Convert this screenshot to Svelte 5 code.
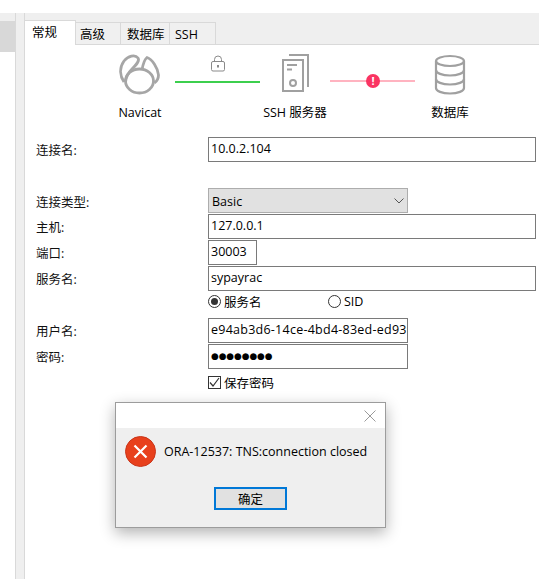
<script>
  const tabs = [
    { label: '常规', active: true },
    { label: '高级' },
    { label: '数据库' },
    { label: 'SSH' }
  ];
</script>

<div class="page">
  <div class="top-gap"></div>
  <div class="shell">
    <aside class="side">
      <div class="side-head"></div>
      <div class="side-sel"></div>
      <div class="side-list"></div>
    </aside>
    <div class="gutter"></div>
    <main class="main">
      <nav class="tabs">
        {#each tabs as t}
          <div class="tab" class:active={t.active}>{t.label}</div>
        {/each}
      </nav>
      <section class="panel">
        <div class="flow">
          <div class="node">
            <svg class="ico" width="42" height="42" viewBox="0 0 42 42" fill="none" stroke="#a6a6a6" stroke-width="2.800">
              <path d="M5 28C1 22 0 14 5 7 9 2 16 0 19 4 21 7 17 11 13 15 9 19 7 23 6.500 28" />
              <ellipse cx="20.500" cy="27" rx="14" ry="12" />
              <path d="M23 16C24 10 26 5 28 3.500 33 5 39 14 39.500 21 39.500 25 38 27 35.500 29" />
            </svg>
            <div class="cap">Navicat</div>
          </div>
          <div class="link">
            <svg class="lock" width="16" height="18" viewBox="0 0 16 18" fill="none" stroke="#8a8a8a">
              <rect x="1.500" y="6.500" width="13" height="9.500" rx="1.500" />
              <path d="M4.500 6.500V4.500a3.500 3.500 0 0 1 7 0v2" />
              <path d="M8 10v2.500" stroke-width="2" />
            </svg>
            <div class="line ok"></div>
          </div>
          <div class="node">
            <svg class="ico" width="42" height="42" viewBox="0 0 42 42" fill="none" stroke="#a0a0a0" stroke-width="2">
              <rect x="9" y="6" width="20" height="31" />
              <path d="M15 1H34V33" />
              <path d="M13 11H23M13 15.500H18" />
              <circle cx="19" cy="29" r="3" />
            </svg>
            <div class="cap">SSH 服务器</div>
          </div>
          <div class="link">
            <div class="line bad"></div>
            <div class="dot">!</div>
          </div>
          <div class="node">
            <svg class="ico" width="42" height="42" viewBox="0 0 42 42" fill="none" stroke="#a0a0a0" stroke-width="2.200">
              <ellipse cx="21" cy="7" rx="14" ry="5" />
              <path d="M7 7V34C7 37 13 39.500 21 39.500S35 37 35 34V7" />
              <path d="M7 16C7 19 13 21.500 21 21.500S35 19 35 16" />
              <path d="M7 25C7 28 13 30.500 21 30.500S35 28 35 25" />
            </svg>
            <div class="cap">数据库</div>
          </div>
        </div>

        <div class="form">
          <div class="row name">
            <span class="lab">连接名:</span>
            <div class="inp wide">10.0.2.104</div>
          </div>
          <div class="row type">
            <span class="lab">连接类型:</span>
            <div class="select">
              <span class="sel-text">Basic</span>
              <svg width="10" height="6" viewBox="0 0 10 6" fill="none" stroke="#555"><path d="M.5.5 5 5 9.500.5" /></svg>
            </div>
          </div>
          <div class="row">
            <span class="lab">主机:</span>
            <div class="inp wide">127.0.0.1</div>
          </div>
          <div class="row">
            <span class="lab">端口:</span>
            <div class="inp port">30003</div>
          </div>
          <div class="row">
            <span class="lab">服务名:</span>
            <div class="inp wide">sypayrac</div>
          </div>
          <div class="radios">
            <span class="radio-item first"><span class="radio on"></span>服务名</span>
            <span class="radio-item"><span class="radio"></span>SID</span>
          </div>
          <div class="row user">
            <span class="lab">用户名:</span>
            <div class="inp mid">e94ab3d6-14ce-4bd4-83ed-ed939</div>
          </div>
          <div class="row">
            <span class="lab">密码:</span>
            <div class="inp mid dots">●●●●●●●●</div>
          </div>
          <div class="save">
            <span class="check">
              <svg width="13" height="13" viewBox="0 0 13 13" fill="none" stroke="#333" stroke-width="1.200"><path d="M2 6.500 5 10 11 2" /></svg>
            </span>保存密码
          </div>
        </div>
      </section>
    </main>
  </div>

  <div class="dialog">
    <div class="d-title">
      <svg width="12" height="12" viewBox="0 0 12 12" stroke="#9a9a9a"><path d="M.5.5 11.500 11.500M11.500.5.500 11.500" /></svg>
    </div>
    <div class="d-body">
      <div class="d-msg">
        <svg width="31" height="31" viewBox="0 0 31 31">
          <circle cx="15.500" cy="15.500" r="15" fill="#e8401c" stroke="#c9361a" />
          <path d="M9.500 9.500 21.500 21.500M21.500 9.500 9.500 21.500" stroke="#fff" stroke-width="2.200" />
        </svg>
        <span class="d-text">ORA-12537: TNS:connection closed</span>
      </div>
      <div class="d-foot"><button>确定</button></div>
    </div>
  </div>
</div>

<style>
  :global(body) {
    margin: 0;
    background: #fff;
  }
  .page {
    position: relative;
    width: 539px;
    height: 579px;
    overflow: hidden;
    background: #fff;
    color: #000;
    font: 12.5px "Open Sans", "Noto Sans CJK SC", sans-serif;
  }
  .top-gap {
    height: 13px;
  }
  .shell {
    display: flex;
    height: 566px;
  }
  .side {
    width: 15px;
    border-right: 1px solid #d9d9d9;
    flex: none;
    display: flex;
    flex-direction: column;
  }
  .side-head {
    height: 8px;
    background: #efefef;
  }
  .side-sel {
    height: 31px;
    background: #d8d8d8;
  }
  .side-list {
    flex: 1;
  }
  .gutter {
    width: 8px;
    flex: none;
    background: #efefef;
    border-right: 1px solid #d9d9d9;
  }
  .main {
    flex: 1;
    min-width: 0;
    display: flex;
    flex-direction: column;
  }
  .tabs {
    display: flex;
    align-items: flex-end;
    height: 32px;
    box-sizing: border-box;
    background: #efefef;
    border-bottom: 1px solid #d9d9d9;
  }
  .tab {
    box-sizing: border-box;
    height: 23px;
    margin-bottom: -1px;
    padding-left: 4px;
    background: #f0f0f0;
    border: 1px solid #d9d9d9;
    border-left: 0;
    line-height: 23px;
    width: 45px;
  }
  .tab:nth-child(3) {
    width: 49px;
    padding-left: 6px;
  }
  .tab:nth-child(4) {
    width: 46px;
    padding-left: 5px;
  }
  .tab.active {
    width: 52px;
    height: 25px;
    padding-left: 7px;
    background: #fff;
    border-left: 1px solid #d9d9d9;
    border-bottom: 0;
    margin-left: -1px;
    position: relative;
    line-height: 24px;
  }
  .panel {
    flex: 1;
    min-height: 0;
  }
  .flow {
    display: flex;
    margin-left: 80px;
    height: 92px;
  }
  .node {
    width: 70px;
    display: flex;
    flex-direction: column;
    align-items: center;
    padding-top: 9px;
  }
  .ico {
    display: block;
  }
  .cap {
    margin-top: 8px;
    line-height: 18px;
    white-space: nowrap;
  }
  .link {
    width: 85px;
    position: relative;
  }
  .line {
    position: absolute;
    left: 0;
    right: 0;
    top: 35px;
    height: 2px;
  }
  .line.ok {
    background: #3ccf4e;
    top: 36px;
  }
  .line.bad {
    background: #ffb3c0;
  }
  .lock {
    position: absolute;
    left: 35px;
    top: 10px;
  }
  .dot {
    position: absolute;
    left: 36px;
    top: 29px;
    width: 14px;
    height: 14px;
    border-radius: 50%;
    background: #fa3462;
    color: #fff;
    font: bold 11px/14px "Open Sans", sans-serif;
    text-align: center;
  }
  .form {
    padding-left: 11px;
  }
  .row {
    display: grid;
    grid-template-columns: 172px auto;
    justify-content: start;
    align-items: center;
    margin-bottom: 1px;
  }
  .lab {
    color: #111;
  }
  .row.type {
    margin-top: 26px;
  }
  .row.type .lab {
    padding-top: 2px;
  }
  .inp {
    box-sizing: border-box;
    height: 25px;
    border: 1px solid #7a7a7a;
    background: #fff;
    padding-left: 2px;
    line-height: 22px;
    overflow: hidden;
    white-space: nowrap;
  }
  .wide {
    width: 328px;
  }
  .port {
    width: 49px;
  }
  .mid {
    width: 200px;
    letter-spacing: 0.25px;
  }
  .dots {
    font-size: 8.8px;
    letter-spacing: 0;
    line-height: 22px;
    font-family: "DejaVu Sans", sans-serif;
  }
  .select {
    box-sizing: border-box;
    width: 200px;
    height: 25px;
    padding: 0 3px;
    background: #e1e1e1;
    border: 1px solid #adadad;
    display: flex;
    align-items: center;
    justify-content: space-between;
  }
  .sel-text {
    padding-top: 2px;
  }
  .radios {
    display: flex;
    margin-left: 172px;
    height: 26px;
    align-items: flex-start;
    box-sizing: border-box;
  }
  .radio-item {
    display: flex;
    align-items: center;
    gap: 3px;
    height: 18px;
  }
  .radio-item.first {
    width: 120px;
  }
  .radio {
    box-sizing: border-box;
    width: 13px;
    height: 13px;
    border: 1px solid #333;
    border-radius: 50%;
    background: #fff;
    position: relative;
  }
  .radio.on::after {
    content: "";
    position: absolute;
    inset: 2px;
    border-radius: 50%;
    background: #333;
  }
  .save {
    display: flex;
    align-items: center;
    gap: 3px;
    margin: 4px 0 0 172px;
    height: 18px;
  }
  .check {
    box-sizing: border-box;
    width: 13px;
    height: 13px;
    border: 1px solid #333;
    background: #fff;
    display: block;
  }
  .check svg {
    display: block;
    margin: -1px;
  }
  .dialog {
    position: absolute;
    left: 115px;
    top: 402px;
    width: 271px;
    height: 126px;
    box-sizing: border-box;
    border: 1px solid #9c9c9c;
    box-shadow: 0 5px 14px rgba(0, 0, 0, 0.3);
    background: #efefef;
    display: flex;
    flex-direction: column;
  }
  .d-title {
    height: 25px;
    flex: none;
    background: #fff;
    display: flex;
    justify-content: flex-end;
    align-items: center;
    padding-right: 9px;
    box-sizing: border-box;
  }
  .d-body {
    flex: 1;
    display: flex;
    flex-direction: column;
  }
  .d-msg {
    display: flex;
    align-items: center;
    gap: 8px;
    padding: 8px 0 0 9px;
    height: 31px;
  }
  .d-foot {
    display: flex;
    justify-content: center;
    margin-top: 20px;
  }
  .d-foot button {
    box-sizing: border-box;
    width: 73px;
    height: 23px;
    padding: 0 0 2px;
    background: #e1e1e1;
    border: 2px solid #0078d7;
    font: inherit;
    color: #000;
  }
</style>
